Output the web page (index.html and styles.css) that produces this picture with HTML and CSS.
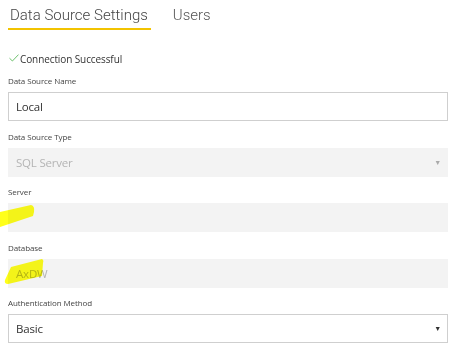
FILE: index.html
```html
<!DOCTYPE html>
<html>
<head>
<meta charset="utf-8">
<link rel="stylesheet" href="styles.css">
</head>
<body>
<div class="page">
  <nav class="tabs">
    <div class="tab active">Data Source Settings</div>
    <div class="tab">Users</div>
  </nav>
  <div class="status">
    <svg class="check" width="10" height="8" viewBox="0 0 10 8"><path d="M0.5 4.2 L3.4 7 L9.5 0.6" fill="none" stroke="#6cc06c" stroke-width="1"/></svg>
    <span>Connection Successful</span>
  </div>
  <div class="field">
    <div class="label">Data Source Name</div>
    <div class="box input">Local</div>
  </div>
  <div class="field">
    <div class="label">Data Source Type</div>
    <div class="box disabled select">SQL Server<span class="arrow light">▼</span></div>
  </div>
  <div class="field">
    <div class="label">Server</div>
    <div class="box disabled"></div>
  </div>
  <div class="field">
    <div class="label">Database</div>
    <div class="box disabled">AxDW</div>
  </div>
  <div class="field">
    <div class="label">Authentication Method</div>
    <div class="box input select">Basic<span class="arrow">▼</span></div>
  </div>
  <svg class="marker" width="60" height="353" viewBox="0 0 60 353">
    <path d="M0 212 L31 205 Q35 206 34 212 L33 216 L3 226 L0 227 Z" fill="#ffff1a"/>
    <path d="M11 267 L42 259 Q44 260 43 263 L42 276 L8 284 Q4 284 5 280 Z" fill="#ffff1a"/>
  </svg>
</div>
</body>
</html>
```

FILE: styles.css
```css
* { box-sizing: border-box; }
html, body { margin: 0; padding: 0; background: #fff; }
body { font-family: "Open Sans", sans-serif; color: #333; }
.page { position: relative; width: 474px; height: 353px; padding: 0 26px 0 8px; overflow: hidden; }
.tabs { display: flex; gap: 20px; height: 30px; }
.tab { font-family: Roboto, sans-serif; font-size: 15px; font-weight: 300; line-height: 28px; padding: 1px 3px 0 2px; color: #555; }
.tab.active { color: #444; border-bottom: 2px solid #f2c300; }
.status { display: flex; align-items: center; gap: 1px; margin-top: 22px; padding-left: 1px; font-size: 10px; letter-spacing: -0.1px; line-height: 14px; color: #333; }
.check { margin-top: -2px; }
.field { display: flex; flex-direction: column; margin-top: 9.5px; }
.status + .field { margin-top: 9px; }
.label { font-size: 8px; letter-spacing: -0.1px; line-height: 12px; color: #444; margin-bottom: 5px; }
.box { position: relative; height: 29px; width: 440px; padding-left: 7px; font-size: 11.5px; letter-spacing: -0.2px; line-height: 27px; color: #333; }
.input { border: 1px solid #cfcfcf; background: #fff; }
.disabled { background: #f3f3f3; border: 1px solid #f3f3f3; color: #b4b4b4; }
.select .arrow { position: absolute; right: 6px; top: 0; font-size: 7px; color: #333; }
.select .arrow.light { color: #aaa; }
.marker { position: absolute; left: 0; top: 0; mix-blend-mode: multiply; pointer-events: none; }
```
